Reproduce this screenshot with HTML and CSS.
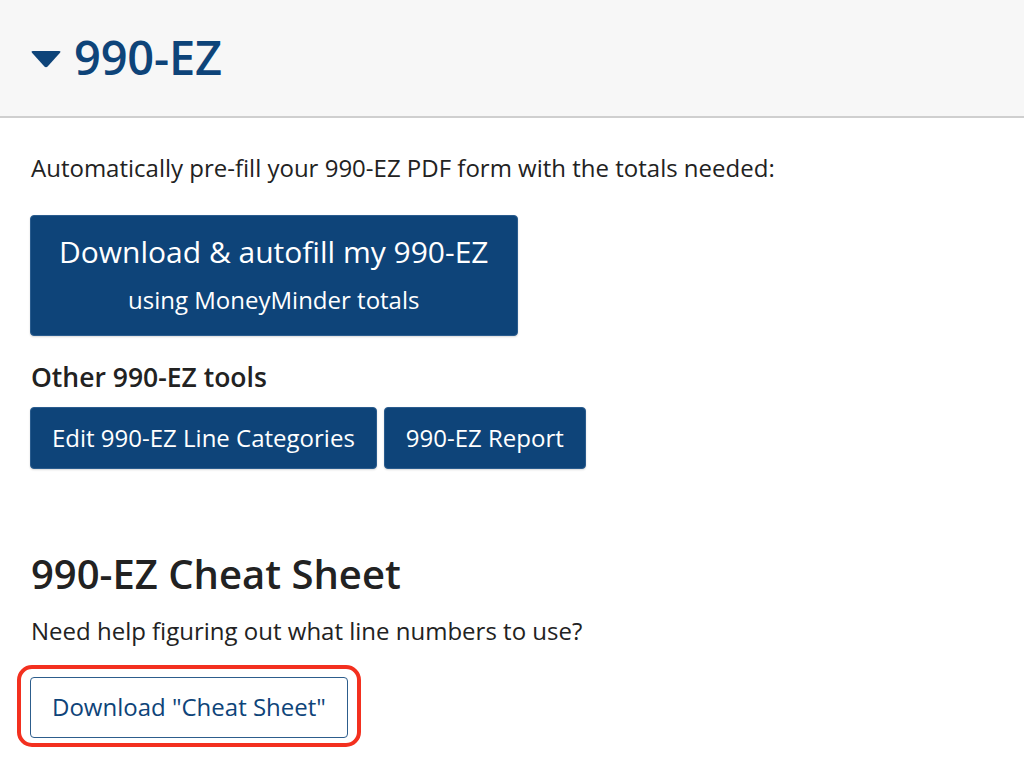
FILE: index.html
```html
<!DOCTYPE html>
<html lang="en">
<head>
    <meta charset="UTF-8">
    <meta name="viewport" content="width=device-width, initial-scale=1.0">
    <title>990-EZ - MoneyMinder</title>
    <link rel="stylesheet" href="styles.css">
</head>
<body>
    <header class="section-header">
        <h1 class="section-title">
            <svg class="caret" viewBox="0 0 30 17" width="30" height="17" aria-hidden="true">
                <path d="M2 0 H28 Q30.5 0 28.8 2 L16.6 15.4 Q15 17 13.4 15.4 L1.2 2 Q-0.5 0 2 0 Z" fill="#0e4479"/>
            </svg>
            990-EZ
        </h1>
    </header>
    <main class="section-body">
        <p class="intro">Automatically pre-fill your 990-EZ PDF form with the totals needed:</p>

        <a href="#" class="btn btn-primary btn-big">
            <span class="btn-big-main">Download &amp; autofill my 990-EZ</span>
            <span class="btn-big-sub">using MoneyMinder totals</span>
        </a>

        <h3 class="tools-title">Other 990-EZ tools</h3>
        <div class="btn-row">
            <a href="#" class="btn btn-primary">Edit 990-EZ Line Categories</a>
            <a href="#" class="btn btn-primary">990-EZ Report</a>
        </div>

        <h2 class="cheat-title">990-EZ Cheat Sheet</h2>
        <p class="cheat-text">Need help figuring out what line numbers to use?</p>
        <div class="btn-row">
            <a href="#" class="btn btn-outline highlighted">Download "Cheat Sheet"</a>
        </div>
    </main>
</body>
</html>
```

FILE: styles.css
```css
body, html {
    margin: 0;
    padding: 0;
    font-family: "Open Sans", Arial, sans-serif;
    color: #222;
    background: #fff;
}

.section-header {
    background-color: #f7f7f7;
    height: 116px;
    border-bottom: 2px solid #cfcfcf;
    display: flex;
    align-items: center;
    padding-left: 31px;
}

.section-title {
    margin: 0;
    display: flex;
    align-items: center;
    gap: 13px;
    font-size: 47px;
    font-weight: 600;
    letter-spacing: -0.2px;
    color: #0e4479;
    line-height: 1;
    padding-bottom: 2px;
}

.caret {
    display: block;
    margin-top: 4px;
}

.section-body {
    padding: 32px 30px 40px;
}

.intro,
.cheat-text {
    margin: 0;
    font-size: 24px;
    line-height: 36px;
    padding-left: 1px;
}

.btn {
    display: inline-block;
    box-sizing: border-box;
    font-size: 24px;
    line-height: 36px;
    text-decoration: none;
    border-radius: 4px;
    text-align: center;
}

.btn-primary {
    background-color: #0e4479;
    color: #fff;
    border: 1px solid #2a5c8e;
    padding: 12px 21px;
    box-shadow: 0 1px 2px rgba(0, 0, 0, 0.15);
}

.btn-big {
    margin-top: 29px;
    padding: 15px 28px 17px;
}

.btn-big-main {
    display: block;
    font-size: 30px;
    line-height: 42px;
}

.btn-big-sub {
    display: block;
    margin-top: 9px;
    line-height: 36px;
}

.tools-title {
    margin: 26px 0 0;
    font-size: 26.5px;
    font-weight: 600;
    line-height: 31px;
    padding-left: 1px;
}

.btn-row {
    display: flex;
    gap: 7px;
}

.tools-title + .btn-row {
    margin-top: 14px;
}

.cheat-title {
    margin: 81px 0 0;
    font-size: 40px;
    font-weight: 600;
    line-height: 48px;
    padding-left: 1px;
}

.cheat-text {
    margin-top: 15px;
}

.cheat-text + .btn-row {
    margin-top: 28px;
}

.btn-outline {
    position: relative;
    background: #fff;
    color: #0e4479;
    border: 1.5px solid #2d5d8c;
    padding: 11px 21px 12px;
}

/* red annotation ring around the cheat sheet button */
.highlighted::after {
    content: "";
    position: absolute;
    top: -13px;
    bottom: -10px;
    left: -14px;
    right: -14px;
    border: 4px solid #f3301f;
    border-radius: 15px;
}
```
